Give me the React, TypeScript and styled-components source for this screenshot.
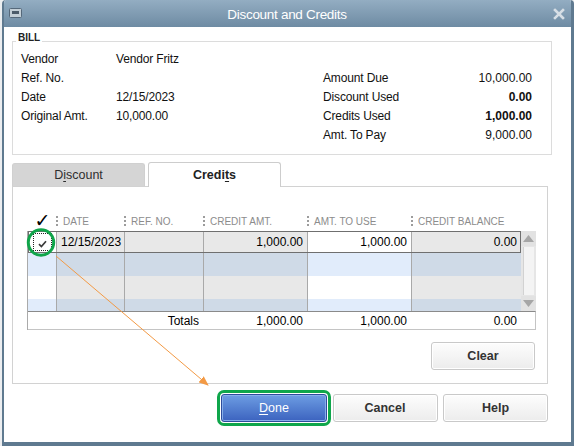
import styled, { createGlobalStyle } from 'styled-components';

const GlobalStyle = createGlobalStyle`
  html, body {
    margin: 0;
    padding: 0;
  }
  body {
    background: #eceef0;
    font-family: 'Liberation Sans', Arial, sans-serif;
    font-size: 12px;
    color: #111;
  }
`;

const billLeft = [
  ['Vendor', 'Vendor Fritz'],
  ['Ref. No.', ''],
  ['Date', '12/15/2023'],
  ['Original Amt.', '10,000.00'],
  ['', ''],
];

const billRight: ([string, string, boolean] | null)[] = [
  null,
  ['Amount Due', '10,000.00', false],
  ['Discount Used', '0.00', true],
  ['Credits Used', '1,000.00', true],
  ['Amt. To Pay', '9,000.00', false],
];

const headers = ['DATE', 'REF. NO.', 'CREDIT AMT.', 'AMT. TO USE', 'CREDIT BALANCE'];

// kind of each grid column: check, plain gray cell, editable white cell
const colKinds = ['check', 'text', 'text', 'text', 'edit', 'text'] as const;
type Kind = (typeof colKinds)[number];

const rows = [
  ['', '12/15/2023', '', '1,000.00', '1,000.00', '0.00'],
  ['', '', '', '', '', ''],
  ['', '', '', '', '', ''],
  ['', '', '', '', '', ''],
];

const cellBg = (kind: Kind, row: number) => {
  if (row === 0) return kind === 'text' ? '#e8e8e8' : '#ffffff';
  const blue = row % 2 === 1;
  if (kind === 'text') return blue ? '#cfdae7' : '#e8e8e8';
  return blue ? '#e1ecfb' : '#ffffff';
};

const App = () => {
  return (
    <Page>
      <GlobalStyle />
      <Window>
        <TitleBar>
          <MenuIcon width="13" height="10" viewBox="0 0 13 10">
            <rect x="0.5" y="0.5" width="12" height="9" rx="1" fill="#c3ced6" stroke="#55687a" />
            <rect x="3" y="3" width="7" height="3" fill="#4b5b69" />
          </MenuIcon>
          <Title>Discount and Credits</Title>
          <CloseIcon width="12" height="12" viewBox="0 0 12 12">
            <path d="M2 2 L10 10 M10 2 L2 10" stroke="#d6dee5" strokeWidth="2.6" strokeLinecap="square" />
          </CloseIcon>
        </TitleBar>

        <Content>
          <BillBox>
            <Legend>BILL</Legend>
            <BillGrid>
              {billLeft.map(([label, value], i) => {
                const right = billRight[i];
                return [
                  <BillLabel key={`l${i}`}>{label}</BillLabel>,
                  <BillValue key={`v${i}`}>{value}</BillValue>,
                  <BillLabel key={`rl${i}`}>{right ? right[0] : ''}</BillLabel>,
                  <BillAmount key={`ra${i}`} $bold={right ? right[2] : false}>
                    {right ? right[1] : ''}
                  </BillAmount>,
                ];
              })}
            </BillGrid>
          </BillBox>

          <TabRow>
            <Tab>
              D<u>i</u>scount
            </Tab>
            <Tab $active>
              Credi<u>t</u>s
            </Tab>
          </TabRow>

          <Panel>
            <HeaderRow>
              <CheckHead>✓</CheckHead>
              {headers.map(h => (
                <HeadCell key={h}>
                  <Dots />
                  {h}
                </HeadCell>
              ))}
            </HeaderRow>

            <TableBox>
              <BodyArea>
                <Rows>
                  {rows.map((row, r) => (
                    <Row key={r} $first={r === 0} $height={r === 0 ? 22 : 23}>
                      {row.map((val, c) => (
                        <Cell
                          key={c}
                          $bg={cellBg(colKinds[c], r)}
                          $right={c >= 3}
                          $lead={c === 0}
                        >
                          {r === 0 && c === 0 ? (
                            <FocusBox>
                              <svg width="9" height="8" viewBox="0 0 9 8">
                                <path d="M1 4.2 L3.4 6.5 L8 1.2" fill="none" stroke="#3a3a3a" strokeWidth="1.7" />
                              </svg>
                            </FocusBox>
                          ) : (
                            val
                          )}
                        </Cell>
                      ))}
                    </Row>
                  ))}
                </Rows>
                <ScrollBar>
                  <ScrollBtn>
                    <svg width="11" height="7" viewBox="0 0 11 7">
                      <path d="M5.5 0 L11 7 L0 7 Z" fill="#a6a6a6" />
                    </svg>
                  </ScrollBtn>
                  <Track>
                    <Thumb />
                  </Track>
                  <ScrollBtn>
                    <svg width="11" height="7" viewBox="0 0 11 7">
                      <path d="M0 0 L11 0 L5.5 7 Z" fill="#a6a6a6" />
                    </svg>
                  </ScrollBtn>
                </ScrollBar>
              </BodyArea>
              <TotalsRow>
                <span />
                <span />
                <TotalCell>Totals</TotalCell>
                <TotalCell>1,000.00</TotalCell>
                <TotalCell>1,000.00</TotalCell>
                <TotalCell>0.00</TotalCell>
                <span />
              </TotalsRow>
            </TableBox>

            <PanelActions>
              <Button $width={104}>Clear</Button>
            </PanelActions>
          </Panel>

          <Footer>
            <Button $primary $width={106}>
              <u>D</u>one
            </Button>
            <Button $width={105}>Cancel</Button>
            <Button $width={105}>Help</Button>
          </Footer>
        </Content>
      </Window>

      <Annotation width="574" height="446" viewBox="0 0 574 446">
        <defs>
          <marker id="arrowHead" markerWidth="10" markerHeight="8" refX="9" refY="4" orient="auto" markerUnits="userSpaceOnUse">
            <path d="M0 0 L10 4 L0 8 Z" fill="#f39a45" />
          </marker>
        </defs>
        <line x1="56" y1="256" x2="208" y2="385" stroke="#f39a45" strokeWidth="1" markerEnd="url(#arrowHead)" />
        <circle cx="41" cy="242.5" r="12.7" fill="none" stroke="#10a54a" strokeWidth="3" />
      </Annotation>
    </Page>
  );
};

const Page = styled.div`
  position: relative;
  width: 574px;
  height: 446px;
  overflow: hidden;
`;

const Window = styled.div`
  display: flex;
  flex-direction: column;
  box-sizing: border-box;
  width: 572px;
  height: 446px;
  margin-left: 2px;
  background: #ffffff;
  border: 0 solid #5f7a90;
  border-width: 0 3px 4px 2px;
  border-radius: 4px 4px 0 0;
  overflow: hidden;
`;

const TitleBar = styled.div`
  display: grid;
  grid-template-columns: 1fr auto 1fr;
  align-items: center;
  height: 27px;
  padding: 0 6px 0 5px;
  background: linear-gradient(#93adc2, #6e8ba3);
  flex-shrink: 0;
`;

const MenuIcon = styled.svg`
  justify-self: start;
  margin-top: -1px;
`;

const CloseIcon = styled.svg`
  justify-self: end;
`;

const Title = styled.div`
  color: #ffffff;
  font-size: 13.5px;
  letter-spacing: -0.3px;
  margin-top: 2px;
`;

const Content = styled.div`
  display: flex;
  flex-direction: column;
  padding-left: 8px;
`;

const BillBox = styled.fieldset`
  box-sizing: border-box;
  width: 540px;
  margin: 5px 0 0 0;
  padding: 0 19px 10px 8px;
  border: 1px solid #dcdcdc;
  min-width: 0;
`;

const Legend = styled.legend`
  margin-left: -5px;
  padding: 0 2px 6px;
  font-size: 10px;
  line-height: 12px;
  font-weight: bold;
  color: #222;
`;

const BillGrid = styled.div`
  display: grid;
  grid-template-columns: 95px 207px 1fr auto;
  grid-auto-rows: 19px;
  align-items: center;
  margin-top: -1px;
`;

const BillLabel = styled.div`
  letter-spacing: -0.15px;
  color: #111;
`;

const BillValue = styled.div`
  letter-spacing: -0.15px;
  color: #111;
`;

const BillAmount = styled.div<{ $bold?: boolean }>`
  text-align: right;
  font-weight: ${p => (p.$bold ? 'bold' : 'normal')};
  color: #111;
`;

const TabRow = styled.div`
  display: flex;
  align-items: flex-end;
  gap: 3px;
  height: 24px;
  margin-top: 7px;
  position: relative;
  z-index: 1;
`;

const Tab = styled.div<{ $active?: boolean }>`
  box-sizing: border-box;
  width: 133px;
  height: ${p => (p.$active ? '25px' : '23px')};
  margin-bottom: ${p => (p.$active ? '-1px' : '0')};
  display: flex;
  align-items: center;
  justify-content: center;
  padding-bottom: 1px;
  background: ${p => (p.$active ? '#ffffff' : '#d5d5d5')};
  border: 1px solid ${p => (p.$active ? '#cdcdcd' : '#d0d0d0')};
  border-bottom: none;
  border-radius: 3px 3px 0 0;
  font-size: 12.5px;
  font-weight: ${p => (p.$active ? 'bold' : 'normal')};
  color: ${p => (p.$active ? '#222' : '#2e2e2e')};

  u {
    text-decoration-thickness: 1px;
    text-underline-offset: 2px;
  }
`;

const Panel = styled.div`
  box-sizing: border-box;
  width: 536px;
  height: 198px;
  padding: 26px 11px 13px 14px;
  border: 1px solid #d2d2d2;
  background: #ffffff;
`;

const HeaderRow = styled.div`
  display: grid;
  grid-template-columns: 29px 68px 79px 104px 104px 110px;
  height: 18px;
  align-items: center;
`;

const CheckHead = styled.div`
  text-align: center;
  font-family: 'DejaVu Sans', sans-serif;
  font-size: 19px;
  font-weight: bold;
  line-height: 18px;
  margin-top: -4px;
  margin-left: 2px;
  color: #000;
`;

const HeadCell = styled.div`
  display: flex;
  align-items: center;
  font-size: 10px;
  color: #8c8c8c;
  white-space: nowrap;
  margin-top: -2px;
`;

const Dots = styled.span`
  width: 0;
  height: 10px;
  border-left: 2px dotted #9c9c9c;
  margin-right: 5px;
`;

const TableBox = styled.div`
  box-sizing: border-box;
  width: 509px;
  border-left: 1px solid #aaaaaa;
`;

const BodyArea = styled.div`
  display: flex;
  height: 80px;
`;

const Rows = styled.div`
  width: 493px;
  height: 80px;
  overflow: hidden;
`;

const Row = styled.div<{ $first?: boolean; $height: number }>`
  display: grid;
  grid-template-columns: 28px 68px 79px 104px 104px 110px;
  height: ${p => p.$height}px;
  outline: ${p => (p.$first ? '1px solid #6f6f6f' : 'none')};
  outline-offset: -1px;
  position: relative;
`;

const Cell = styled.div<{ $bg: string; $right?: boolean; $lead?: boolean }>`
  box-sizing: border-box;
  display: flex;
  align-items: center;
  justify-content: ${p => (p.$lead ? 'center' : p.$right ? 'flex-end' : 'flex-start')};
  padding: 0 4px;
  background: ${p => p.$bg};
  border-left: ${p => (p.$lead ? 'none' : '1px solid #a9a9a9')};
  font-size: 12px;
  color: #000;
  white-space: nowrap;
`;

const FocusBox = styled.span`
  box-sizing: border-box;
  display: flex;
  align-items: center;
  justify-content: center;
  width: 25px;
  height: 18px;
  margin-left: 1px;
  padding-top: 3px;
  border: 1px dotted #222;
`;

const ScrollBar = styled.div`
  display: flex;
  flex-direction: column;
  width: 15px;
  background: #e6e6e6;
`;

const ScrollBtn = styled.div`
  display: flex;
  align-items: center;
  justify-content: center;
  height: 15px;
  background: #e2e2e2;
`;

const Track = styled.div`
  flex: 1;
  display: flex;
  padding: 1px 2px 1px 2px;
`;

const Thumb = styled.div`
  flex: 1;
  background: #f4f4f4;
  border-left: 1px solid #d2d2d2;
`;

const TotalsRow = styled.div`
  box-sizing: border-box;
  display: grid;
  grid-template-columns: 28px 68px 79px 104px 104px 110px 15px;
  height: 19px;
  align-items: center;
  border-top: 1px solid #8a8a8a;
  border-bottom: 1px solid #c4c4c4;
  border-right: 1px solid #c4c4c4;
`;

const TotalCell = styled.div`
  text-align: right;
  padding-right: 4px;
  font-size: 12px;
  color: #000;
`;

const PanelActions = styled.div`
  display: flex;
  justify-content: flex-end;
  margin-top: 12px;
  padding-right: 1px;
`;

const Button = styled.button<{ $primary?: boolean; $width: number }>`
  box-sizing: border-box;
  width: ${p => p.$width}px;
  height: 28px;
  padding: 0;
  border-radius: 3px;
  font-family: 'Liberation Sans', Arial, sans-serif;
  font-size: 12.5px;
  font-weight: ${p => (p.$primary ? 'normal' : 'bold')};
  color: ${p => (p.$primary ? '#ffffff' : '#333333')};
  border: 1px solid ${p => (p.$primary ? '#2e4c9c' : '#c9c9c9')};
  background: ${p =>
    p.$primary
      ? 'linear-gradient(#6d9de3, #3c63bf)'
      : 'linear-gradient(#fdfdfd, #ececec)'};
  box-shadow: ${p => (p.$primary ? 'inset 0 0 0 1px #86aeea' : 'inset 0 0 0 1px #ffffff')};
  outline: ${p => (p.$primary ? '3px solid #0fa64b' : 'none')};
  outline-offset: 1px;

  u {
    text-underline-offset: 2px;
  }
`;

const Footer = styled.div`
  display: flex;
  justify-content: flex-end;
  gap: 5.5px;
  width: 536px;
  margin-top: 10px;
`;

const Annotation = styled.svg`
  position: absolute;
  top: 0;
  left: 0;
  pointer-events: none;
`;

export default App;
